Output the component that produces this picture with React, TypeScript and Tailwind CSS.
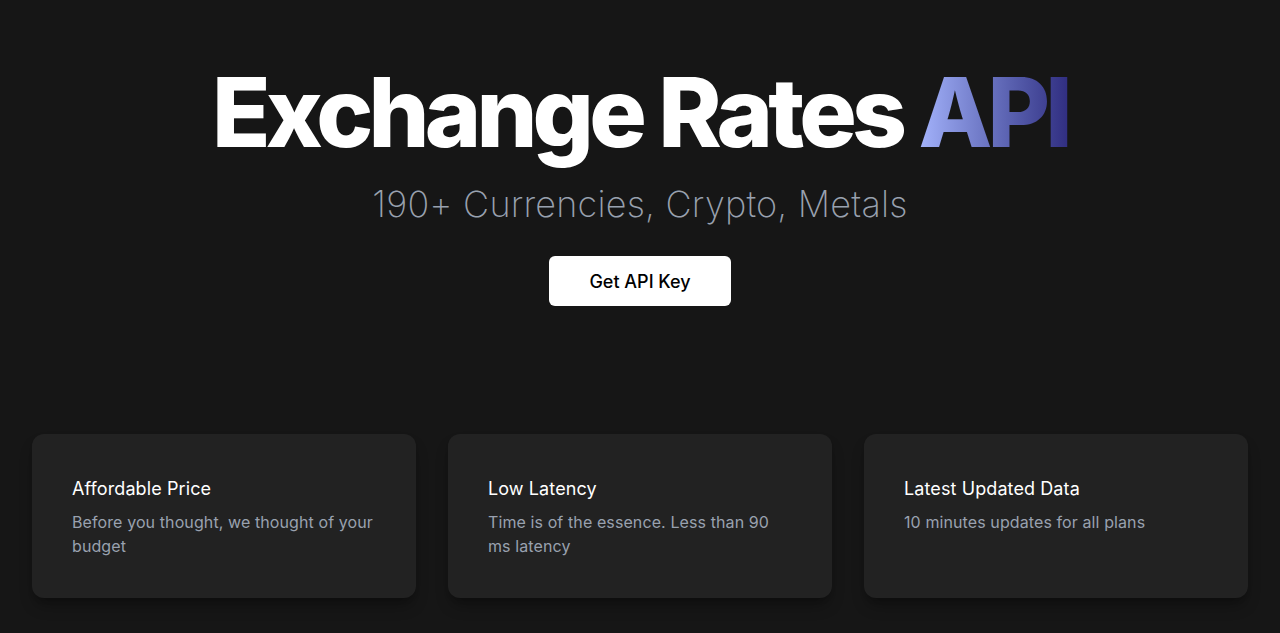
import React from "react";

const features = [
  { title: "Affordable Price", text: "Before you thought, we thought of your budget" },
  { title: "Low Latency", text: "Time is of the essence. Less than 90 ms latency" },
  { title: "Latest Updated Data", text: "10 minutes updates for all plans" },
];

export default function App() {
  return (
    <div className="min-h-[633px] bg-[#161616] font-['Inter',sans-serif] text-white">
      {/* hero */}
      <section className="flex flex-col items-center pt-[64px]">
        <h1 className="text-[96px] font-extrabold leading-none tracking-[-0.05em]">
          Exchange Rates{" "}
          <span className="bg-gradient-to-r from-[#a5b4fc] to-[#312e81] bg-clip-text text-transparent">
            API
          </span>
        </h1>
        <p className="mt-[24px] text-4xl font-extralight tracking-[0.2px] text-gray-400">
          190+ Currencies, Crypto, Metals
        </p>
        <button
          type="button"
          className="mt-[32px] h-[50px] w-[182px] rounded-md bg-white pt-[2px] text-lg font-medium text-black"
        >
          Get API Key
        </button>
      </section>

      {/* features */}
      <section className="mt-[128px] grid grid-cols-3 gap-8 px-8">
        {features.map((f) => (
          <div
            key={f.title}
            className="rounded-xl bg-[#222222] px-10 pt-[41px] pb-[40px] shadow-lg shadow-black/30"
          >
            <h3 className="text-lg font-normal leading-7 tracking-[0.1px] text-white">{f.title}</h3>
            <p className="mt-[7px] text-base leading-6 tracking-[0.1px] text-gray-400">{f.text}</p>
          </div>
        ))}
      </section>
    </div>
  );
}
